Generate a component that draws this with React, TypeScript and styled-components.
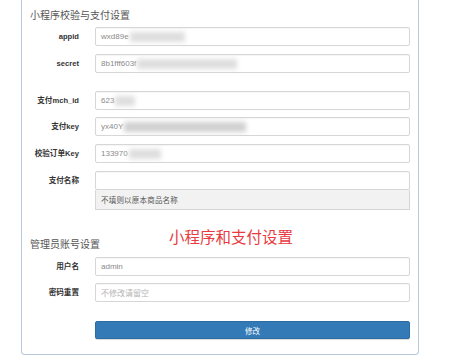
import React from 'react';
import styled, { createGlobalStyle } from 'styled-components';

const GlobalStyle = createGlobalStyle`
  body {
    margin: 0;
    background: #ffffff;
    font-family: 'Liberation Sans', 'Noto Sans CJK SC', sans-serif;
  }
`;

const Panel = styled.div`
  margin-left: 21px;
  width: 380px;
  padding: 9px 8px 15px 8px;
  border: 1px solid #b6c8da;
  border-top: none;
  border-radius: 0 0 4px 4px;
  display: flex;
  flex-direction: column;
`;

const SectionTitle = styled.div`
  font-size: 10px;
  line-height: 14px;
  color: #555555;
`;

const Row = styled.div<{ $top: number }>`
  display: flex;
  align-items: flex-start;
  margin-top: ${p => p.$top}px;
`;

const Label = styled.div`
  width: 49px;
  margin-right: 16px;
  text-align: right;
  font-size: 7.6px;
  font-weight: bold;
  line-height: 19px;
  color: #333333;
  white-space: nowrap;
`;

const Field = styled.div`
  flex: 1;
  display: flex;
  flex-direction: column;
`;

const Input = styled.div`
  height: 19px;
  box-sizing: border-box;
  border: 1px solid #d6d6d6;
  border-radius: 2px;
  background: #ffffff;
  padding: 0 5px;
  display: flex;
  align-items: center;
  font-size: 8px;
  color: #8a8a8a;
  box-shadow: inset 0 1px 1px rgba(0, 0, 0, 0.04);
`;

const Placeholder = styled.span`
  color: #b5b5b5;
`;

const Blur = styled.span<{ $w: number; $shade?: string }>`
  display: inline-block;
  width: ${p => p.$w}px;
  height: 10px;
  margin-left: 1px;
  background: ${p => p.$shade || '#dedede'};
  filter: blur(2.5px);
`;

const Help = styled.div`
  height: 20px;
  box-sizing: border-box;
  border: 1px solid #d6d6d6;
  border-top: none;
  background: #f2f2f2;
  padding: 0 5px;
  display: flex;
  align-items: center;
  font-size: 7.5px;
  letter-spacing: 0.2px;
  color: #555555;
`;

const HeaderRow = styled.div`
  display: flex;
  align-items: flex-end;
  margin-top: 18px;
`;

const Note = styled.div`
  margin-left: 69px;
  margin-bottom: 3px;
  font-size: 15.5px;
  line-height: 20px;
  color: #e83a40;
`;

const SubTitle = styled(SectionTitle)`
  line-height: 12px;
`;

const ButtonRow = styled.div`
  display: flex;
  margin-top: 19px;
  padding-left: 65px;
`;

const Button = styled.button`
  flex: 1;
  height: 18px;
  border: 1px solid #2e6da4;
  border-radius: 2px;
  background: #337ab7;
  color: #ffffff;
  font-family: inherit;
  font-size: 7.5px;
  padding: 0;
  box-shadow: 0 1px 1px rgba(0, 0, 0, 0.15);
`;

export default function App() {
  return (
    <>
      <GlobalStyle />
      <Panel>
        <SectionTitle>小程序校验与支付设置</SectionTitle>
        <Row $top={4}>
          <Label>appid</Label>
          <Field>
            <Input>wxd89e<Blur $w={55} /></Input>
          </Field>
        </Row>
        <Row $top={8}>
          <Label>secret</Label>
          <Field>
            <Input>8b1fff603f<Blur $w={100} /></Input>
          </Field>
        </Row>
        <Row $top={18}>
          <Label>支付mch_id</Label>
          <Field>
            <Input>623<Blur $w={20} /></Input>
          </Field>
        </Row>
        <Row $top={7}>
          <Label>支付key</Label>
          <Field>
            <Input>yx40Y<Blur $w={122} $shade="#d0d0d0" /></Input>
          </Field>
        </Row>
        <Row $top={8}>
          <Label>校验订单Key</Label>
          <Field>
            <Input>133970<Blur $w={32} /></Input>
          </Field>
        </Row>
        <Row $top={8}>
          <Label>支付名称</Label>
          <Field>
            <Input />
            <Help>不填则以原本商品名称</Help>
          </Field>
        </Row>
        <HeaderRow>
          <SubTitle>管理员账号设置</SubTitle>
          <Note>小程序和支付设置</Note>
        </HeaderRow>
        <Row $top={6}>
          <Label>用户名</Label>
          <Field>
            <Input>admin</Input>
          </Field>
        </Row>
        <Row $top={7}>
          <Label>密码重置</Label>
          <Field>
            <Input>
              <Placeholder>不修改请留空</Placeholder>
            </Input>
          </Field>
        </Row>
        <ButtonRow>
          <Button>修改</Button>
        </ButtonRow>
      </Panel>
    </>
  );
}
